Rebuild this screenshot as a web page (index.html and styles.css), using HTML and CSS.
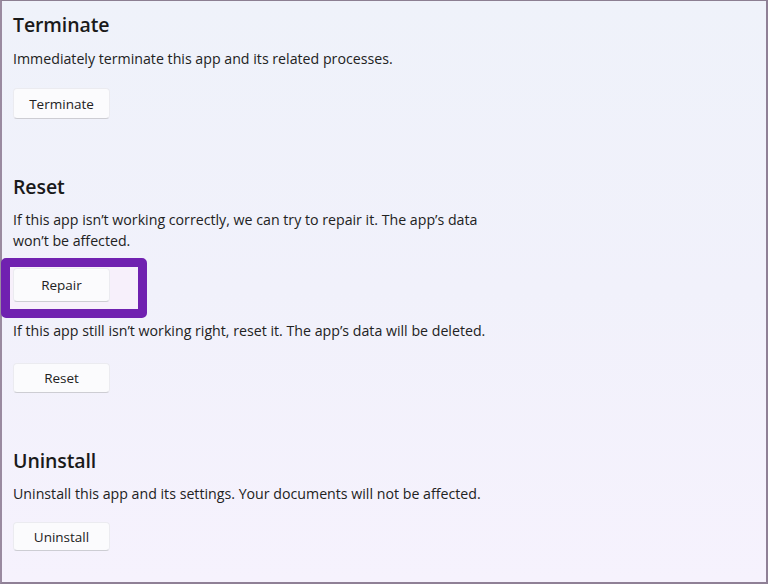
FILE: index.html
```html
<!DOCTYPE html>
<html lang="en">
<head>
<meta charset="utf-8">
<title>App settings</title>
<link rel="stylesheet" href="styles.css">
</head>
<body>
<main class="frame">
  <section class="section terminate">
    <h2 class="title">Terminate</h2>
    <p class="desc">Immediately terminate this app and its related processes.</p>
    <button class="btn">Terminate</button>
  </section>

  <section class="section reset">
    <h2 class="title">Reset</h2>
    <p class="desc wrap">If this app isn’t working correctly, we can try to repair it. The app’s data won’t be affected.</p>
    <div class="highlight-wrap">
      <span class="highlight"></span>
      <button class="btn btn-repair">Repair</button>
    </div>
    <p class="desc desc-after">If this app still isn’t working right, reset it. The app’s data will be deleted.</p>
    <button class="btn btn-reset">Reset</button>
  </section>

  <section class="section uninstall">
    <h2 class="title">Uninstall</h2>
    <p class="desc">Uninstall this app and its settings. Your documents will not be affected.</p>
    <button class="btn">Uninstall</button>
  </section>
</main>
</body>
</html>
```

FILE: styles.css
```css
* { box-sizing: border-box; }
html, body { margin: 0; padding: 0; }
body {
  width: 768px;
  height: 584px;
  overflow: hidden;
  font-family: "Open Sans", "Noto Sans", sans-serif;
  color: #1c1c1c;
}
.frame {
  width: 768px;
  height: 584px;
  border-top: 1px solid #8c7f92;
  border-left: 2px solid #9a8aa0;
  border-right: 2px solid #8f8096;
  border-bottom: 2px solid #8f8096;
  background: linear-gradient(180deg, #eff2fa 0%, #f1f1fb 50%, #f6f2fd 100%);
  padding: 10px 0 0 11px;
  display: flex;
  flex-direction: column;
}
.section { display: flex; flex-direction: column; align-items: flex-start; }
.title {
  margin: 0;
  font-size: 19.5px;
  font-weight: 600;
  line-height: 28px;
  color: #1a1a1a;
  letter-spacing: -0.1px;
}
.desc {
  margin: 0;
  font-size: 14.2px;
  line-height: 21px;
  color: #222;
}
.wrap { width: 500px; }
.btn {
  font-family: inherit;
  font-size: 13.5px;
  color: #222;
  width: 97px;
  height: 31px;
  margin-left: 0;
  background: #fbfbfd;
  border: 1px solid #ebebf0;
  border-bottom: 1px solid #cdcdd3;
  border-radius: 4px;
  padding: 0;
}
.terminate .desc { margin-top: 9px; }
.terminate .btn { margin-top: 19px; }
.reset { margin-top: 54px; }
.reset .wrap { margin-top: 8px; }
.highlight-wrap {
  position: relative;
  margin-top: 17px;
}
.highlight-wrap .btn { height: 34px; position: relative; }
.highlight {
  position: absolute;
  left: -12px;
  top: -10px;
  width: 146px;
  height: 60px;
  border: 9px solid #7021b0;
  border-radius: 5px;
  background: #f7f0fb;
}
.desc-after { margin-top: 18px; }
.btn-reset { margin-top: 22px; height: 30px; }
.uninstall { margin-top: 54px; }
.uninstall .desc { margin-top: 8px; }
.uninstall .btn { margin-top: 18px; height: 29px; }
```
